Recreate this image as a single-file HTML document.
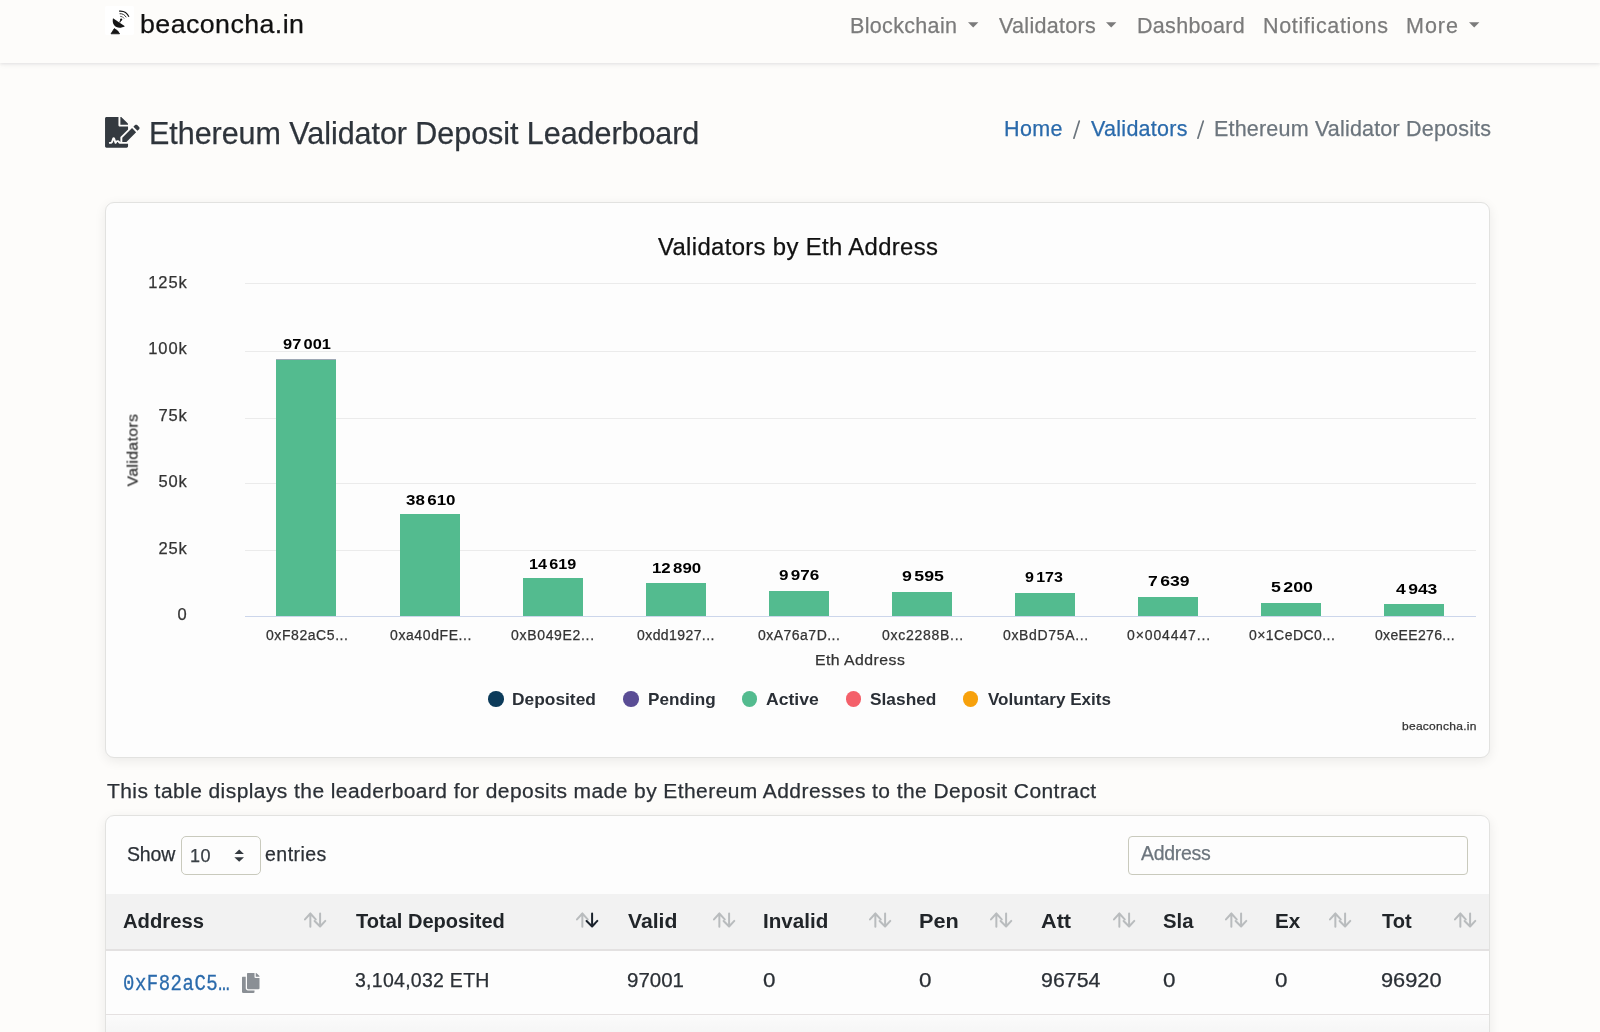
<!DOCTYPE html>
<html><head><meta charset="utf-8"><title>beaconcha.in</title>
<style>
*{margin:0;padding:0;box-sizing:border-box}
html,body{width:1600px;height:1032px;overflow:hidden;background:#fdfcfa;font-family:"Liberation Sans",sans-serif}
.t{position:absolute;white-space:nowrap;will-change:transform;-webkit-text-stroke:0.25px currentColor}
.r{position:absolute}
</style></head><body>
<div class="r" style="left:0px;top:0px;width:1600px;height:63px;background:#fdfcfa;box-shadow:0 1px 3px rgba(20,20,45,.09),0 2px 6px rgba(20,20,45,.04)"></div>
<div class="r" style="left:105px;top:6px;width:29px;height:29px;background:#fff;border-radius:2px"></div>
<svg class="r" style="left:103px;top:4px" width="34" height="34" viewBox="0 0 34 34">
<path d="M10,14.2 C8.3,21.5 14.5,26.2 21.9,22.2 Z" fill="#151515"/>
<path d="M16.6,18.6 L18.3,15.4" stroke="#151515" stroke-width="1.1"/>
<circle cx="18.2" cy="15.6" r="1.1" fill="#151515"/>
<path d="M8,29.8 L11.3,24.6 Q14.5,26 16.6,29.8 Z" fill="#151515" stroke="#151515" stroke-width="0.8" stroke-linejoin="round"/>
<path d="M16.1,7.2 A9.6,9.6 0 0 1 25.9,12.8" stroke="#151515" stroke-width="1.2" fill="none"/>
<path d="M16.6,9.7 A7.2,7.2 0 0 1 23.2,13.3" stroke="#333" stroke-width="1.0" fill="none"/>
<path d="M17.1,12.3 A4.6,4.6 0 0 1 21.2,14.6" stroke="#555" stroke-width="0.9" fill="none"/>
</svg>
<div class="t" style="left:140.24px;top:9.00px;font-size:26px;line-height:30px;font-weight:normal;letter-spacing:0.41px;color:#111;font-family:'Liberation Sans';transform:scaleX(1.03);transform-origin:0 0">beaconcha.in</div>
<div class="t" style="left:849.60px;top:13.75px;font-size:21.5px;line-height:24px;font-weight:normal;letter-spacing:0.33px;color:#7b7b7b;font-family:'Liberation Sans'">Blockchain</div>
<div class="t" style="left:999.40px;top:13.75px;font-size:21.5px;line-height:24px;font-weight:normal;letter-spacing:0.3px;color:#7b7b7b;font-family:'Liberation Sans'">Validators</div>
<div class="t" style="left:1137.00px;top:13.75px;font-size:21.5px;line-height:24px;font-weight:normal;letter-spacing:0.31px;color:#7b7b7b;font-family:'Liberation Sans'">Dashboard</div>
<div class="t" style="left:1263.00px;top:13.75px;font-size:21.5px;line-height:24px;font-weight:normal;letter-spacing:0.65px;color:#7b7b7b;font-family:'Liberation Sans'">Notifications</div>
<div class="t" style="left:1406.30px;top:13.75px;font-size:21.5px;line-height:24px;font-weight:normal;letter-spacing:1.0px;color:#7b7b7b;font-family:'Liberation Sans'">More</div>
<svg class="r" style="left:967.5px;top:22px" width="11" height="6" viewBox="0 0 11 6"><path d="M0,0.2 L10.4,0.2 L5.2,5.4 Z" fill="#7b7b7b"/></svg>
<svg class="r" style="left:1106.3px;top:22px" width="11" height="6" viewBox="0 0 11 6"><path d="M0,0.2 L10.4,0.2 L5.2,5.4 Z" fill="#7b7b7b"/></svg>
<svg class="r" style="left:1469.3px;top:22px" width="11" height="6" viewBox="0 0 11 6"><path d="M0,0.2 L10.4,0.2 L5.2,5.4 Z" fill="#7b7b7b"/></svg>
<svg class="r" style="left:105.2px;top:117.1px" width="34.6" height="30.7" viewBox="0 0 576 512"><path fill="#343a40" d="M218.17 424.14c-2.950-5.920-8.090-6.520-10.170-6.520s-7.220.590-10.020 6.190l-7.670 15.340c-6.370 12.780-25.030 11.370-29.480-2.090L144 386.590l-10.610 31.880c-5.890 17.660-22.380 29.530-41 29.530H80c-8.840 0-16-7.160-16-16s7.160-16 16-16h12.390c4.830 0 9.110-3.080 10.640-7.660l18.190-54.640c3.300-9.810 12.440-16.410 22.780-16.410s19.480 6.590 22.770 16.410l13.880 41.640c19.750-16.190 54.060-9.700 66 14.160 1.890 3.780 5.490 5.950 9.360 6.260v-82.120l128-127.090V160H248c-13.200 0-24-10.800-24-24V0H24C10.700 0 0 10.700 0 24v464c0 13.300 10.700 24 24 24h336c13.300 0 24-10.700 24-24v-40l-128-.110c-16.120-.310-30.580-9.280-37.830-23.750zM384 121.900c0-6.300-2.500-12.400-7-16.900L279.100 7c-4.500-4.500-10.600-7-17-7H256v128h128v-6.100zm-96 225.060V416h68.990l161.680-162.780-67.880-67.880L288 346.960zm280.540-179.630l-31.870-31.870c-9.940-9.940-26.070-9.940-36.010 0l-27.250 27.250 67.880 67.880 27.250-27.250c9.950-9.940 9.950-26.070 0-36.010z"/></svg>
<div class="t" style="left:148.90px;top:116.10px;font-size:30.5px;line-height:34px;font-weight:normal;letter-spacing:-0.05px;color:#2e343b;font-family:'Liberation Sans'">Ethereum Validator Deposit Leaderboard</div>
<div class="t" style="left:1004.40px;top:117.30px;font-size:21.5px;line-height:24px;font-weight:normal;letter-spacing:0.4px;color:#2a6aab;font-family:'Liberation Sans'">Home</div>
<svg class="r" style="left:1072px;top:119px" width="10" height="21" viewBox="0 0 10 21"><path d="M1.9,19.2 L7.3,2" stroke="#6c757d" stroke-width="1.7" stroke-linecap="round"/></svg>
<div class="t" style="left:1091.40px;top:117.30px;font-size:21.5px;line-height:24px;font-weight:normal;letter-spacing:0.28px;color:#2a6aab;font-family:'Liberation Sans'">Validators</div>
<svg class="r" style="left:1196px;top:119px" width="10" height="21" viewBox="0 0 10 21"><path d="M1.9,19.2 L7.3,2" stroke="#6c757d" stroke-width="1.7" stroke-linecap="round"/></svg>
<div class="t" style="left:1214.00px;top:117.30px;font-size:21.5px;line-height:24px;font-weight:normal;letter-spacing:0.19px;color:#6c757d;font-family:'Liberation Sans'">Ethereum Validator Deposits</div>
<div class="r" style="left:105px;top:202px;width:1385px;height:556px;background:#fdfdfd;border:1px solid #e2e2e0;border-radius:9px;box-shadow:0 3px 12px rgba(0,0,0,.075)"></div>
<div class="t" style="left:658.00px;top:233.60px;font-size:23px;line-height:26px;font-weight:normal;letter-spacing:0.34px;color:#111;font-family:'Liberation Sans';transform:scaleX(1.0375);transform-origin:0 0">Validators by Eth Address</div>
<div class="r" style="left:244.5px;top:283px;width:1231px;height:1px;background:#ebebeb"></div>
<div class="r" style="left:244.5px;top:351px;width:1231px;height:1px;background:#ebebeb"></div>
<div class="r" style="left:244.5px;top:418px;width:1231px;height:1px;background:#ebebeb"></div>
<div class="r" style="left:244.5px;top:483px;width:1231px;height:1px;background:#ebebeb"></div>
<div class="r" style="left:244.5px;top:550px;width:1231px;height:1px;background:#ebebeb"></div>
<div class="t" style="left:80px;width:107.7px;text-align:right;top:272.8px;font-size:16.5px;line-height:19px;letter-spacing:0.9px;margin-right:-0.9px;color:#333">125k</div>
<div class="t" style="left:80px;width:107.7px;text-align:right;top:339.3px;font-size:16.5px;line-height:19px;letter-spacing:0.9px;margin-right:-0.9px;color:#333">100k</div>
<div class="t" style="left:80px;width:107.7px;text-align:right;top:405.8px;font-size:16.5px;line-height:19px;letter-spacing:0.9px;margin-right:-0.9px;color:#333">75k</div>
<div class="t" style="left:80px;width:107.7px;text-align:right;top:472.3px;font-size:16.5px;line-height:19px;letter-spacing:0.9px;margin-right:-0.9px;color:#333">50k</div>
<div class="t" style="left:80px;width:107.7px;text-align:right;top:538.8px;font-size:16.5px;line-height:19px;letter-spacing:0.9px;margin-right:-0.9px;color:#333">25k</div>
<div class="t" style="left:80px;width:107.7px;text-align:right;top:605.3px;font-size:16.5px;line-height:19px;letter-spacing:0.9px;margin-right:-0.9px;color:#333">0</div>
<div class="t" style="left:131.5px;top:450px;font-size:15.5px;line-height:17px;letter-spacing:0.5px;color:#333;transform:translate(-50%,-50%) rotate(-90deg)">Validators</div>
<div class="r" style="left:276.4px;top:359.0px;width:60px;height:257.0px;background:#53bb8f"></div>
<div class="t" style="left:282.77px;top:336.10px;font-size:14.5px;line-height:16px;font-weight:bold;letter-spacing:0px;color:#000;font-family:'Liberation Sans';-webkit-text-stroke:0;word-spacing:-2px;transform:scaleX(1.132);transform-origin:0 0">97 001</div>
<div class="t" style="left:266.10px;top:627.40px;font-size:14px;line-height:16px;font-weight:normal;letter-spacing:0.57px;color:#333;font-family:'Liberation Sans'">0xF82aC5...</div>
<div class="r" style="left:399.5px;top:514.3px;width:60px;height:101.7px;background:#53bb8f"></div>
<div class="t" style="left:405.83px;top:491.50px;font-size:14.5px;line-height:16px;font-weight:bold;letter-spacing:0px;color:#000;font-family:'Liberation Sans';-webkit-text-stroke:0;word-spacing:-2px;transform:scaleX(1.169);transform-origin:0 0">38 610</div>
<div class="t" style="left:389.50px;top:627.40px;font-size:14px;line-height:16px;font-weight:normal;letter-spacing:0.6px;color:#333;font-family:'Liberation Sans'">0xa40dFE...</div>
<div class="r" style="left:522.6px;top:578.1px;width:60px;height:37.9px;background:#53bb8f"></div>
<div class="t" style="left:528.59px;top:555.80px;font-size:14.5px;line-height:16px;font-weight:bold;letter-spacing:0px;color:#000;font-family:'Liberation Sans';-webkit-text-stroke:0;word-spacing:-2px;transform:scaleX(1.115);transform-origin:0 0">14 619</div>
<div class="t" style="left:511.40px;top:627.40px;font-size:14px;line-height:16px;font-weight:normal;letter-spacing:0.68px;color:#333;font-family:'Liberation Sans'">0xB049E2...</div>
<div class="r" style="left:645.7px;top:582.7px;width:60px;height:33.3px;background:#53bb8f"></div>
<div class="t" style="left:651.64px;top:559.60px;font-size:14.5px;line-height:16px;font-weight:bold;letter-spacing:0px;color:#000;font-family:'Liberation Sans';-webkit-text-stroke:0;word-spacing:-2px;transform:scaleX(1.16);transform-origin:0 0">12 890</div>
<div class="t" style="left:637.40px;top:627.40px;font-size:14px;line-height:16px;font-weight:normal;letter-spacing:0.42px;color:#333;font-family:'Liberation Sans'">0xdd1927...</div>
<div class="r" style="left:768.8px;top:590.5px;width:60px;height:25.5px;background:#53bb8f"></div>
<div class="t" style="left:779.03px;top:567.20px;font-size:14.5px;line-height:16px;font-weight:bold;letter-spacing:0px;color:#000;font-family:'Liberation Sans';-webkit-text-stroke:0;word-spacing:-2px;transform:scaleX(1.175);transform-origin:0 0">9 976</div>
<div class="t" style="left:758.20px;top:627.40px;font-size:14px;line-height:16px;font-weight:normal;letter-spacing:0.48px;color:#333;font-family:'Liberation Sans'">0xA76a7D...</div>
<div class="r" style="left:891.9px;top:591.5px;width:60px;height:24.5px;background:#53bb8f"></div>
<div class="t" style="left:901.78px;top:568.25px;font-size:14.5px;line-height:16px;font-weight:bold;letter-spacing:0px;color:#000;font-family:'Liberation Sans';-webkit-text-stroke:0;word-spacing:-2px;transform:scaleX(1.222);transform-origin:0 0">9 595</div>
<div class="t" style="left:881.50px;top:627.40px;font-size:14px;line-height:16px;font-weight:normal;letter-spacing:0.73px;color:#333;font-family:'Liberation Sans'">0xc2288B...</div>
<div class="r" style="left:1015.0px;top:592.6px;width:60px;height:23.4px;background:#53bb8f"></div>
<div class="t" style="left:1025.19px;top:569.30px;font-size:14.5px;line-height:16px;font-weight:bold;letter-spacing:0px;color:#000;font-family:'Liberation Sans';-webkit-text-stroke:0;word-spacing:-2px;transform:scaleX(1.106);transform-origin:0 0">9 173</div>
<div class="t" style="left:1003.00px;top:627.40px;font-size:14px;line-height:16px;font-weight:normal;letter-spacing:0.65px;color:#333;font-family:'Liberation Sans'">0xBdD75A...</div>
<div class="r" style="left:1138.1px;top:596.7px;width:60px;height:19.3px;background:#53bb8f"></div>
<div class="t" style="left:1147.79px;top:573.10px;font-size:14.5px;line-height:16px;font-weight:bold;letter-spacing:0px;color:#000;font-family:'Liberation Sans';-webkit-text-stroke:0;word-spacing:-2px;transform:scaleX(1.211);transform-origin:0 0">7 639</div>
<div class="t" style="left:1126.80px;top:627.40px;font-size:14px;line-height:16px;font-weight:normal;letter-spacing:0.89px;color:#333;font-family:'Liberation Sans'">0×004447...</div>
<div class="r" style="left:1261.2px;top:603.2px;width:60px;height:12.8px;background:#53bb8f"></div>
<div class="t" style="left:1271.08px;top:579.30px;font-size:14.5px;line-height:16px;font-weight:bold;letter-spacing:0px;color:#000;font-family:'Liberation Sans';-webkit-text-stroke:0;word-spacing:-2px;transform:scaleX(1.225);transform-origin:0 0">5 200</div>
<div class="t" style="left:1248.60px;top:627.40px;font-size:14px;line-height:16px;font-weight:normal;letter-spacing:0.45px;color:#333;font-family:'Liberation Sans'">0×1CeDC0...</div>
<div class="r" style="left:1384.3px;top:603.9px;width:60px;height:12.1px;background:#53bb8f"></div>
<div class="t" style="left:1395.50px;top:580.70px;font-size:14.5px;line-height:16px;font-weight:bold;letter-spacing:0px;color:#000;font-family:'Liberation Sans';-webkit-text-stroke:0;word-spacing:-2px;transform:scaleX(1.206);transform-origin:0 0">4 943</div>
<div class="t" style="left:1374.70px;top:627.40px;font-size:14px;line-height:16px;font-weight:normal;letter-spacing:0.33px;color:#333;font-family:'Liberation Sans'">0xeEE276...</div>
<div class="r" style="left:276.3px;top:359px;width:60.2px;height:1.2px;background:#9ea8b5"></div>
<div class="r" style="left:244.5px;top:616px;width:1231px;height:1px;background:#ccd6eb"></div>
<div class="t" style="left:815.35px;top:650.60px;font-size:15px;line-height:17px;font-weight:normal;letter-spacing:0.43px;color:#333;font-family:'Liberation Sans';transform:scaleX(1.0545);transform-origin:0 0">Eth Address</div>
<div class="r" style="left:488.4px;top:691.4px;width:15.6px;height:15.6px;border-radius:50%;background:#0c3b5a"></div>
<div class="t" style="left:512.35px;top:690.40px;font-size:16.5px;line-height:18px;font-weight:bold;letter-spacing:0px;color:#2a2f36;font-family:'Liberation Sans';-webkit-text-stroke:0;transform:scaleX(1.052);transform-origin:0 0">Deposited</div>
<div class="r" style="left:623.2px;top:691.4px;width:15.6px;height:15.6px;border-radius:50%;background:#5a4d95"></div>
<div class="t" style="left:647.56px;top:690.40px;font-size:16.5px;line-height:18px;font-weight:bold;letter-spacing:0px;color:#2a2f36;font-family:'Liberation Sans';-webkit-text-stroke:0;transform:scaleX(1.039);transform-origin:0 0">Pending</div>
<div class="r" style="left:741.9px;top:691.4px;width:15.6px;height:15.6px;border-radius:50%;background:#53bb8f"></div>
<div class="t" style="left:766.34px;top:690.40px;font-size:16.5px;line-height:18px;font-weight:bold;letter-spacing:0px;color:#2a2f36;font-family:'Liberation Sans';-webkit-text-stroke:0;transform:scaleX(1.064);transform-origin:0 0">Active</div>
<div class="r" style="left:845.9px;top:691.4px;width:15.6px;height:15.6px;border-radius:50%;background:#f4606a"></div>
<div class="t" style="left:869.95px;top:690.40px;font-size:16.5px;line-height:18px;font-weight:bold;letter-spacing:0px;color:#2a2f36;font-family:'Liberation Sans';-webkit-text-stroke:0;transform:scaleX(1.05);transform-origin:0 0">Slashed</div>
<div class="r" style="left:962.9px;top:691.4px;width:15.6px;height:15.6px;border-radius:50%;background:#f7a10c"></div>
<div class="t" style="left:988.00px;top:690.40px;font-size:16.5px;line-height:18px;font-weight:bold;letter-spacing:0px;color:#2a2f36;font-family:'Liberation Sans';-webkit-text-stroke:0;transform:scaleX(1.034);transform-origin:0 0">Voluntary Exits</div>
<div class="t" style="left:1402.36px;top:720.10px;font-size:11.5px;line-height:12px;font-weight:normal;letter-spacing:0.26px;color:#333;font-family:'Liberation Sans';transform:scaleX(1.044);transform-origin:0 0">beaconcha.in</div>
<div class="t" style="left:106.60px;top:779.50px;font-size:20px;line-height:22px;font-weight:normal;letter-spacing:0.415px;color:#2b3036;font-family:'Liberation Sans';transform:scaleX(1.0485);transform-origin:0 0">This table displays the leaderboard for deposits made by Ethereum Addresses to the Deposit Contract</div>
<div class="r" style="left:105px;top:815px;width:1385px;height:260px;background:#fdfdfd;border:1px solid #e2e2e0;border-radius:9px;box-shadow:0 3px 12px rgba(0,0,0,.075)"></div>
<div class="t" style="left:126.75px;top:843.00px;font-size:19.5px;line-height:22px;font-weight:normal;letter-spacing:-0.17px;color:#2b3036;font-family:'Liberation Sans'">Show</div>
<div class="r" style="left:181px;top:836px;width:80px;height:39px;border:1px solid #c9cabd;border-radius:5px;background:#fdfdfd"></div>
<div class="t" style="left:190.25px;top:845.75px;font-size:18px;line-height:20px;font-weight:normal;letter-spacing:0.6px;color:#3a4046;font-family:'Liberation Sans'">10</div>
<svg class="r" style="left:234px;top:849px" width="11" height="14" viewBox="0 0 11 14"><path d="M0.6,5.1 L5.2,0.6 L9.9,5.1 Z M0.3,8.2 L10,8.2 L5.2,12.8 Z" fill="#343a40"/></svg>
<div class="t" style="left:265.20px;top:843.00px;font-size:19.5px;line-height:22px;font-weight:normal;letter-spacing:0.47px;color:#2b3036;font-family:'Liberation Sans'">entries</div>
<div class="r" style="left:1128px;top:836px;width:340px;height:39px;border:1px solid #c9cabd;border-radius:4px;background:#fdfdfd"></div>
<div class="t" style="left:1140.50px;top:842.20px;font-size:19.5px;line-height:22px;font-weight:normal;letter-spacing:-0.3px;color:#6c757d;font-family:'Liberation Sans'">Address</div>
<div class="r" style="left:106px;top:894px;width:1383px;height:55px;background:#f2f2f2"></div>
<div class="r" style="left:106px;top:949px;width:1383px;height:2px;background:#e3e1e1"></div>
<div class="t" style="left:122.56px;top:910.00px;font-size:19.5px;line-height:22px;font-weight:bold;letter-spacing:0px;color:#212529;font-family:'Liberation Sans';-webkit-text-stroke:0;transform:scaleX(1.037);transform-origin:0 0">Address</div>
<div class="t" style="left:355.75px;top:910.00px;font-size:19.5px;line-height:22px;font-weight:bold;letter-spacing:0px;color:#212529;font-family:'Liberation Sans';-webkit-text-stroke:0;transform:scaleX(1.028);transform-origin:0 0">Total Deposited</div>
<div class="t" style="left:627.70px;top:910.00px;font-size:19.5px;line-height:22px;font-weight:bold;letter-spacing:0px;color:#212529;font-family:'Liberation Sans';-webkit-text-stroke:0;transform:scaleX(1.084);transform-origin:0 0">Valid</div>
<div class="t" style="left:763.14px;top:910.00px;font-size:19.5px;line-height:22px;font-weight:bold;letter-spacing:0px;color:#212529;font-family:'Liberation Sans';-webkit-text-stroke:0;transform:scaleX(1.057);transform-origin:0 0">Invalid</div>
<div class="t" style="left:918.79px;top:910.00px;font-size:19.5px;line-height:22px;font-weight:bold;letter-spacing:0px;color:#212529;font-family:'Liberation Sans';-webkit-text-stroke:0;transform:scaleX(1.112);transform-origin:0 0">Pen</div>
<div class="t" style="left:1040.64px;top:910.00px;font-size:19.5px;line-height:22px;font-weight:bold;letter-spacing:0px;color:#212529;font-family:'Liberation Sans';-webkit-text-stroke:0;transform:scaleX(1.11);transform-origin:0 0">Att</div>
<div class="t" style="left:1163.36px;top:910.00px;font-size:19.5px;line-height:22px;font-weight:bold;letter-spacing:0px;color:#212529;font-family:'Liberation Sans';-webkit-text-stroke:0;transform:scaleX(1.041);transform-origin:0 0">Sla</div>
<div class="t" style="left:1274.94px;top:910.00px;font-size:19.5px;line-height:22px;font-weight:bold;letter-spacing:0px;color:#212529;font-family:'Liberation Sans';-webkit-text-stroke:0;transform:scaleX(1.06);transform-origin:0 0">Ex</div>
<div class="t" style="left:1381.90px;top:910.00px;font-size:19.5px;line-height:22px;font-weight:bold;letter-spacing:0px;color:#212529;font-family:'Liberation Sans';-webkit-text-stroke:0;transform:scaleX(1.03);transform-origin:0 0">Tot</div>
<svg class="r" style="left:304.0px;top:912px" width="23" height="16" viewBox="0 0 23 16"><path d="M1,7.4 L6.35,1.5 L11.7,7.4 M6.35,1.6 V14.8" stroke="#b9bcbe" stroke-width="2" fill="none" stroke-linecap="round" stroke-linejoin="round"/><path d="M10.6,9 L16.1,14.5 L21.3,8.9 M16.1,1.5 V14.3" stroke="#b9bcbe" stroke-width="2" fill="none" stroke-linecap="round" stroke-linejoin="round"/></svg>
<svg class="r" style="left:576.3px;top:912px" width="23" height="16" viewBox="0 0 23 16"><path d="M1,7.4 L6.35,1.5 L11.7,7.4 M6.35,1.6 V14.8" stroke="#b9bcbe" stroke-width="2" fill="none" stroke-linecap="round" stroke-linejoin="round"/><path d="M10.6,9 L16.1,14.5 L21.3,8.9 M16.1,1.5 V14.3" stroke="#1a222c" stroke-width="2" fill="none" stroke-linecap="round" stroke-linejoin="round"/></svg>
<svg class="r" style="left:712.8px;top:912px" width="23" height="16" viewBox="0 0 23 16"><path d="M1,7.4 L6.35,1.5 L11.7,7.4 M6.35,1.6 V14.8" stroke="#b9bcbe" stroke-width="2" fill="none" stroke-linecap="round" stroke-linejoin="round"/><path d="M10.6,9 L16.1,14.5 L21.3,8.9 M16.1,1.5 V14.3" stroke="#b9bcbe" stroke-width="2" fill="none" stroke-linecap="round" stroke-linejoin="round"/></svg>
<svg class="r" style="left:868.5px;top:912px" width="23" height="16" viewBox="0 0 23 16"><path d="M1,7.4 L6.35,1.5 L11.7,7.4 M6.35,1.6 V14.8" stroke="#b9bcbe" stroke-width="2" fill="none" stroke-linecap="round" stroke-linejoin="round"/><path d="M10.6,9 L16.1,14.5 L21.3,8.9 M16.1,1.5 V14.3" stroke="#b9bcbe" stroke-width="2" fill="none" stroke-linecap="round" stroke-linejoin="round"/></svg>
<svg class="r" style="left:990.0px;top:912px" width="23" height="16" viewBox="0 0 23 16"><path d="M1,7.4 L6.35,1.5 L11.7,7.4 M6.35,1.6 V14.8" stroke="#b9bcbe" stroke-width="2" fill="none" stroke-linecap="round" stroke-linejoin="round"/><path d="M10.6,9 L16.1,14.5 L21.3,8.9 M16.1,1.5 V14.3" stroke="#b9bcbe" stroke-width="2" fill="none" stroke-linecap="round" stroke-linejoin="round"/></svg>
<svg class="r" style="left:1113.0px;top:912px" width="23" height="16" viewBox="0 0 23 16"><path d="M1,7.4 L6.35,1.5 L11.7,7.4 M6.35,1.6 V14.8" stroke="#b9bcbe" stroke-width="2" fill="none" stroke-linecap="round" stroke-linejoin="round"/><path d="M10.6,9 L16.1,14.5 L21.3,8.9 M16.1,1.5 V14.3" stroke="#b9bcbe" stroke-width="2" fill="none" stroke-linecap="round" stroke-linejoin="round"/></svg>
<svg class="r" style="left:1224.8px;top:912px" width="23" height="16" viewBox="0 0 23 16"><path d="M1,7.4 L6.35,1.5 L11.7,7.4 M6.35,1.6 V14.8" stroke="#b9bcbe" stroke-width="2" fill="none" stroke-linecap="round" stroke-linejoin="round"/><path d="M10.6,9 L16.1,14.5 L21.3,8.9 M16.1,1.5 V14.3" stroke="#b9bcbe" stroke-width="2" fill="none" stroke-linecap="round" stroke-linejoin="round"/></svg>
<svg class="r" style="left:1329.4px;top:912px" width="23" height="16" viewBox="0 0 23 16"><path d="M1,7.4 L6.35,1.5 L11.7,7.4 M6.35,1.6 V14.8" stroke="#b9bcbe" stroke-width="2" fill="none" stroke-linecap="round" stroke-linejoin="round"/><path d="M10.6,9 L16.1,14.5 L21.3,8.9 M16.1,1.5 V14.3" stroke="#b9bcbe" stroke-width="2" fill="none" stroke-linecap="round" stroke-linejoin="round"/></svg>
<svg class="r" style="left:1453.9px;top:912px" width="23" height="16" viewBox="0 0 23 16"><path d="M1,7.4 L6.35,1.5 L11.7,7.4 M6.35,1.6 V14.8" stroke="#b9bcbe" stroke-width="2" fill="none" stroke-linecap="round" stroke-linejoin="round"/><path d="M10.6,9 L16.1,14.5 L21.3,8.9 M16.1,1.5 V14.3" stroke="#b9bcbe" stroke-width="2" fill="none" stroke-linecap="round" stroke-linejoin="round"/></svg>
<div class="t" style="left:122.60px;top:974.00px;font-size:19px;line-height:22px;font-weight:normal;letter-spacing:0.5px;color:#2a6aab;font-family:'Liberation Mono';transform:scaleY(1.17);transform-origin:0 16px">0xF82aC5…</div>
<svg class="r" style="left:242px;top:973px" width="17.5" height="20" viewBox="0 0 448 512"><path fill="#8a8f95" d="M320 448v40c0 13.255-10.745 24-24 24H24c-13.255 0-24-10.745-24-24V120c0-13.255 10.745-24 24-24h72v296c0 30.879 25.121 56 56 56h168zm0-344V0H152c-13.255 0-24 10.745-24 24v368c0 13.255 10.745 24 24 24h272c13.255 0 24-10.745 24-24V128H344c-13.200 0-24-10.800-24-24zm120.971-31.029L375.029 7.029A24 24 0 0 0 358.059 0H352v96h96v-6.059a24 24 0 0 0-7.029-16.970z"/></svg>
<div class="t" style="left:354.75px;top:969.40px;font-size:19.5px;line-height:22px;font-weight:normal;letter-spacing:0.27px;color:#2b3036;font-family:'Liberation Sans'">3,104,032 ETH</div>
<div class="t" style="left:626.65px;top:969.40px;font-size:19.5px;line-height:22px;font-weight:normal;letter-spacing:0px;color:#2b3036;font-family:'Liberation Sans';transform:scaleX(1.05);transform-origin:0 0">97001</div>
<div class="t" style="left:763.05px;top:969.40px;font-size:19.5px;line-height:22px;font-weight:normal;letter-spacing:0px;color:#2b3036;font-family:'Liberation Sans';transform:scaleX(1.15);transform-origin:0 0">0</div>
<div class="t" style="left:918.85px;top:969.40px;font-size:19.5px;line-height:22px;font-weight:normal;letter-spacing:0px;color:#2b3036;font-family:'Liberation Sans';transform:scaleX(1.15);transform-origin:0 0">0</div>
<div class="t" style="left:1040.65px;top:969.40px;font-size:19.5px;line-height:22px;font-weight:normal;letter-spacing:0px;color:#2b3036;font-family:'Liberation Sans';transform:scaleX(1.096);transform-origin:0 0">96754</div>
<div class="t" style="left:1163.25px;top:969.40px;font-size:19.5px;line-height:22px;font-weight:normal;letter-spacing:0px;color:#2b3036;font-family:'Liberation Sans';transform:scaleX(1.15);transform-origin:0 0">0</div>
<div class="t" style="left:1274.85px;top:969.40px;font-size:19.5px;line-height:22px;font-weight:normal;letter-spacing:0px;color:#2b3036;font-family:'Liberation Sans';transform:scaleX(1.15);transform-origin:0 0">0</div>
<div class="t" style="left:1380.78px;top:969.40px;font-size:19.5px;line-height:22px;font-weight:normal;letter-spacing:0px;color:#2b3036;font-family:'Liberation Sans';transform:scaleX(1.117);transform-origin:0 0">96920</div>
<div class="r" style="left:106px;top:1015px;width:1383px;height:17px;background:linear-gradient(#fbfbfb,#f6f6f6)"></div>
<div class="r" style="left:106px;top:1014px;width:1383px;height:1px;background:#e5e1e1"></div>
</body></html>
